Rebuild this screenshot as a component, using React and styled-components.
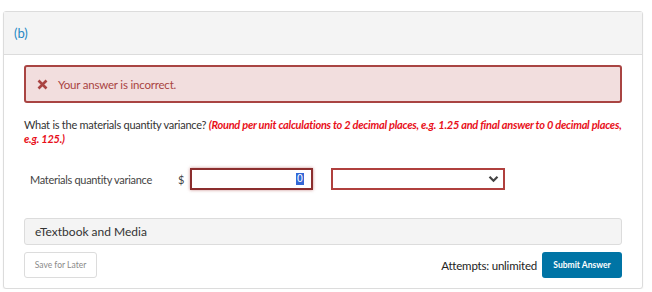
import React from 'react';
import styled, { createGlobalStyle } from 'styled-components';

const GlobalStyle = createGlobalStyle`
  body {
    margin: 0;
    background: #fff;
    font-family: Lato, "Open Sans", sans-serif;
    color: #333;
  }
`;

const App = () => {
  return (
    <Page>
      <GlobalStyle />
      <Card>
        <CardHeader>(b)</CardHeader>
        <CardBody>
          <Alert>
            <svg width="11" height="11" viewBox="0 0 11 11">
              <path d="M1.5 1.5 L9.5 9.5 M9.5 1.5 L1.5 9.5" stroke="#a94442" strokeWidth="2.6" strokeLinecap="butt" />
            </svg>
            <span>Your answer is incorrect.</span>
          </Alert>

          <Question>
            What is the materials quantity variance?{' '}
            <Hint>(Round per unit calculations to 2 decimal places, e.g. 1.25 and final answer to 0 decimal places, e.g. 125.)</Hint>
          </Question>

          <AnswerRow>
            <Label>Materials quantity variance</Label>
            <Currency>$</Currency>
            <AmountField>
              <Selected>0</Selected>
            </AmountField>
            <Dropdown>
              <svg width="11" height="8" viewBox="0 0 11 8">
                <path d="M1.5 1.8 L5.5 5.8 L9.5 1.8" stroke="#444" strokeWidth="2.2" fill="none" />
              </svg>
            </Dropdown>
          </AnswerRow>

          <MediaBar>eTextbook and Media</MediaBar>

          <Footer>
            <SaveButton>Save for Later</SaveButton>
            <Actions>
              <Attempts>Attempts: unlimited</Attempts>
              <SubmitButton>Submit Answer</SubmitButton>
            </Actions>
          </Footer>
        </CardBody>
      </Card>
    </Page>
  );
};

export default App;

const Page = styled.div`
  padding: 11px 0 0 3px;
`;

const Card = styled.div`
  width: 638px;
  border: 1px solid #dcdcdc;
  border-radius: 3px;
  box-shadow: 0 1px 2px rgba(0, 0, 0, 0.06);
  background: #fff;
`;

const CardHeader = styled.div`
  height: 42px;
  display: flex;
  align-items: center;
  padding-left: 10px;
  background: #f4f4f4;
  border-bottom: 1px solid #dcdcdc;
  color: #2489c5;
  font-size: 13px;
`;

const CardBody = styled.div`
  padding: 10px 20px 10px;
`;

const Alert = styled.div`
  height: 34px;
  display: flex;
  align-items: center;
  gap: 10px;
  padding: 0 11px;
  background: #f2dede;
  border: 2px solid #a94442;
  border-radius: 3px;
  color: #a94442;
  font-size: 11.5px;
  letter-spacing: -0.2px;
`;

const Question = styled.div`
  margin-top: 15px;
  font-size: 11px;
  line-height: 14px;
  color: #333;
  letter-spacing: -0.25px;
`;

const Hint = styled.span`
  color: #e8101a;
  font-weight: bold;
  font-style: italic;
`;

const AnswerRow = styled.div`
  display: flex;
  align-items: center;
  margin-top: 22px;
  padding-left: 6px;
`;

const Label = styled.span`
  font-size: 11px;
  color: #444;
  letter-spacing: -0.3px;
  width: 148px;
`;

const Currency = styled.span`
  font-size: 11px;
  color: #444;
  width: 12px;
`;

const AmountField = styled.div`
  width: 112px;
  height: 18px;
  border: 2px solid #8b2e2e;
  box-shadow: 0 0 3px rgba(169, 68, 66, 0.6);
  display: flex;
  align-items: center;
  justify-content: flex-end;
  padding-right: 7px;
  box-sizing: content-box;
  margin-right: 18px;
`;

const Selected = styled.span`
  background: #3367d6;
  color: #fff;
  font-family: "DejaVu Sans", sans-serif;
  font-size: 10px;
  line-height: 12px;
  padding: 0 1px;
`;

const Dropdown = styled.div`
  width: 166px;
  height: 18px;
  border: 2px solid #b0403e;
  display: flex;
  align-items: center;
  justify-content: flex-end;
  padding-right: 4px;
  box-sizing: content-box;
`;

const MediaBar = styled.div`
  margin-top: 28px;
  height: 25px;
  display: flex;
  align-items: center;
  padding-left: 10px;
  background: #f4f4f4;
  border: 1px solid #dcdcdc;
  border-radius: 3px;
  font-size: 12px;
  color: #333;
`;

const Footer = styled.div`
  margin-top: 7px;
  display: flex;
  justify-content: space-between;
  align-items: center;
`;

const SaveButton = styled.button`
  width: 73px;
  height: 26px;
  padding: 0;
  background: #fff;
  border: 1px solid #dcdcdc;
  border-radius: 3px;
  font-family: Lato, sans-serif;
  font-size: 8.5px;
  color: #8a8a8a;
`;

const Actions = styled.div`
  display: flex;
  align-items: center;
  gap: 5px;
`;

const Attempts = styled.span`
  font-size: 11.5px;
  color: #222;
  letter-spacing: -0.2px;
`;

const SubmitButton = styled.button`
  width: 80px;
  height: 26px;
  padding: 0;
  border: none;
  border-radius: 3px;
  background: #0074a5;
  color: #fff;
  font-family: Lato, sans-serif;
  font-weight: bold;
  font-size: 8.5px;
`;
